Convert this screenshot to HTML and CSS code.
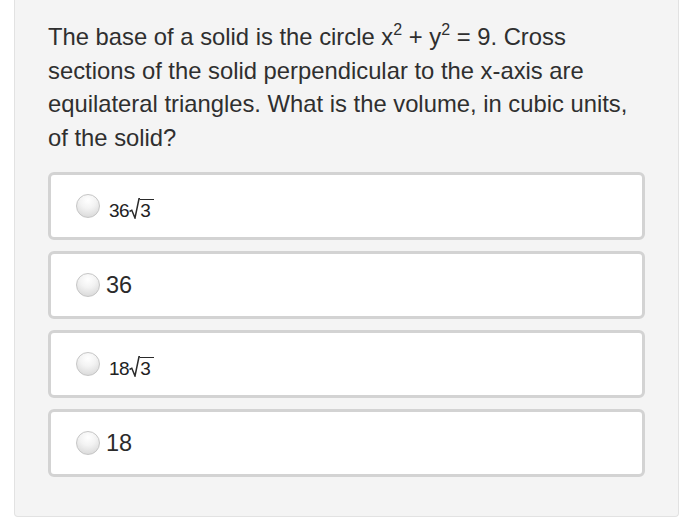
FILE: index.html
```html
<!DOCTYPE html>
<html>
<head>
<meta charset="utf-8">
<link rel="stylesheet" href="styles.css">
</head>
<body>
<div class="panel">
  <p class="question">The base of a solid is the circle x<sup>2</sup> + y<sup>2</sup> = 9. Cross<br>sections of the solid perpendicular to the x-axis are<br>equilateral triangles. What is the volume, in cubic units,<br>of the solid?</p>
  <div class="options">
    <label class="option"><span class="radio"></span><span class="math"><span class="coef">36</span><svg class="rad" width="11" height="21" viewBox="0 0 11 21"><path d="M0.5 13.5 L2.8 12.2 L6 20 L10 0.8 L11 0.8" fill="none" stroke="#2a2a2a" stroke-width="1.5" stroke-linejoin="miter"/></svg><span class="radicand">3</span></span></label>
    <label class="option"><span class="radio"></span><span class="plain">36</span></label>
    <label class="option"><span class="radio"></span><span class="math"><span class="coef">18</span><svg class="rad" width="11" height="21" viewBox="0 0 11 21"><path d="M0.5 13.5 L2.8 12.2 L6 20 L10 0.8 L11 0.8" fill="none" stroke="#2a2a2a" stroke-width="1.5" stroke-linejoin="miter"/></svg><span class="radicand">3</span></span></label>
    <label class="option"><span class="radio"></span><span class="plain">18</span></label>
  </div>
</div>
</body>
</html>
```
FILE: styles.css
```css
html, body {
  margin: 0;
  padding: 0;
  background: #ffffff;
}
body {
  font-family: "Liberation Sans", Arial, sans-serif;
  color: #2b2b2b;
}
.panel {
  margin: 0 21px 0 14px;
  height: 517px;
  box-sizing: border-box;
  background: #f4f4f4;
  border: 1px solid #e2e2e2;
  border-top: none;
  border-radius: 0 0 4px 4px;
  padding: 20px 33px 0 33px;
}
.question {
  margin: 0;
  font-size: 23.8px;
  line-height: 33.5px;
  color: #2f2f2f;
  white-space: nowrap;
}
.question sup {
  font-size: 16px;
  line-height: 0;
  vertical-align: 10px;
}
.options {
  margin-top: 18px;
  display: flex;
  flex-direction: column;
  gap: 11px;
}
.option {
  display: flex;
  align-items: center;
  height: 68px;
  box-sizing: border-box;
  background: #ffffff;
  border: 3px solid #d3d3d3;
  border-radius: 6px;
  padding-left: 25px;
}
.radio {
  width: 22px;
  height: 22px;
  border-radius: 50%;
  border: 1px solid #c6c6c6;
  background: radial-gradient(circle at 50% 25%, #ffffff 0%, #f3f3f3 40%, #d2d2d2 100%);
  flex: none;
  margin-right: 6px;
}
.plain {
  font-size: 23.5px;
  color: #2b2b2b;
}
.math {
  display: inline-flex;
  align-items: flex-end;
  height: 21px;
  margin-left: 3px;
  margin-top: 4px;
  font-size: 19px;
  line-height: 17px;
  color: #222222;
  letter-spacing: -0.5px;
}
.coef {
  display: block;
  height: 17px;
}
.rad {
  display: block;
  flex: none;
}
.radicand {
  display: block;
  border-top: 1.5px solid #2a2a2a;
  padding: 2px 4px 0 0;
  height: 17px;
}
```
